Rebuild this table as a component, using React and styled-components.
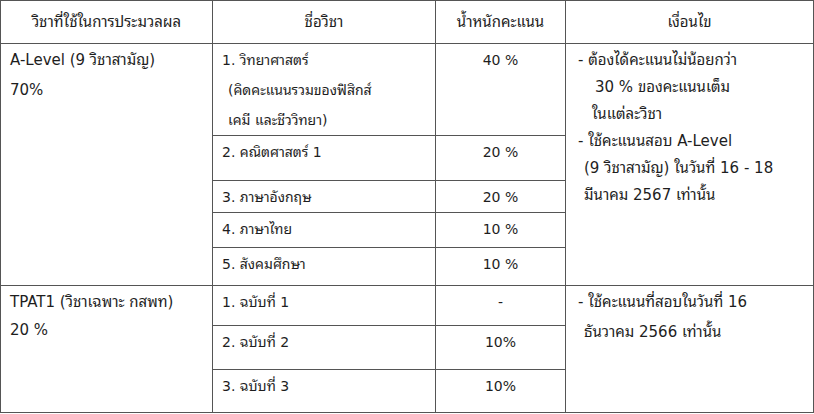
import React from "react";
import styled, { createGlobalStyle } from "styled-components";

const GlobalStyle = createGlobalStyle`
  html, body {
    margin: 0;
    padding: 0;
    background: #fff;
  }
  body {
    font-family: "DejaVu Sans", "Noto Sans Thai Looped", "Loma", "Garuda", "Waree", "Noto Sans Thai", "Noto Sans", sans-serif;
    color: #1e1e1e;
  }
`;

const criteria = [
  {
    name: ["A-Level (9 วิชาสามัญ)", "70%"],
    subjects: [
      { title: ["1. วิทยาศาสตร์", "(คิดคะแนนรวมของฟิสิกส์", "เคมี และชีววิทยา)"], weight: "40 %", h: 91 },
      { title: ["2. คณิตศาสตร์ 1"], weight: "20 %", h: 45 },
      { title: ["3. ภาษาอังกฤษ"], weight: "20 %", h: 32 },
      { title: ["4. ภาษาไทย"], weight: "10 %", h: 35 },
      { title: ["5. สังคมศึกษา"], weight: "10 %", h: 38 },
    ],
    notes: [
      { text: "-  ต้องได้คะแนนไม่น้อยกว่า", indent: 0 },
      { text: "30 % ของคะแนนเต็ม", indent: 17 },
      { text: "ในแต่ละวิชา", indent: 14 },
      { text: "- ใช้คะแนนสอบ A-Level", indent: 0 },
      { text: "(9 วิชาสามัญ) ในวันที่ 16 - 18", indent: 6 },
      { text: "มีนาคม  2567 เท่านั้น", indent: 6 },
    ],
    noteLine: 27,
    nameLine: 30,
  },
  {
    name: ["TPAT1 (วิชาเฉพาะ กสพท)", "20 %"],
    subjects: [
      { title: ["1. ฉบับที่ 1"], weight: "-", h: 40 },
      { title: ["2. ฉบับที่ 2"], weight: "10%", h: 44 },
      { title: ["3. ฉบับที่ 3"], weight: "10%", h: 43 },
    ],
    notes: [
      { text: "- ใช้คะแนนที่สอบในวันที่ 16", indent: 0 },
      { text: "ธันวาคม 2566 เท่านั้น", indent: 6 },
    ],
    noteLine: 30,
    nameLine: 28,
  },
];

const ScoreTable = () => (
  <Table>
    <colgroup>
      <col style={{ width: 212 }} />
      <col style={{ width: 223 }} />
      <col style={{ width: 130 }} />
      <col style={{ width: 248 }} />
    </colgroup>
    <thead>
      <Row $h={43}>
        <HeadCell>วิชาที่ใช้ในการประมวลผล</HeadCell>
        <HeadCell>ชื่อวิชา</HeadCell>
        <HeadCell>น้ำหนักคะแนน</HeadCell>
        <HeadCell>เงื่อนไข</HeadCell>
      </Row>
    </thead>
    <tbody>
      {criteria.map((group) =>
        group.subjects.map((sub, i) => {
          const lh = sub.title.length > 1 ? 30 : 24;
          return (
            <Row key={group.name[0] + i} $h={sub.h}>
              {i === 0 && (
                <Cell rowSpan={group.subjects.length} $line={group.nameLine} $size={15}>
                  {group.name.map((l) => (
                    <Line key={l} $line={group.nameLine}>{l}</Line>
                  ))}
                </Cell>
              )}
              <Cell $line={lh}>
                {sub.title.map((l, j) => (
                  <Line key={l} $line={lh} $indent={j > 0 ? 6 : 0}>
                    {l}
                  </Line>
                ))}
              </Cell>
              <Cell $center $line={24}>
                <Line $line={24}>{sub.weight}</Line>
              </Cell>
              {i === 0 && (
                <Cell
                  rowSpan={group.subjects.length}
                  $line={group.noteLine}
                  $pad={12}
                  $size={15}
                >
                  {group.notes.map((n) => (
                    <Line key={n.text} $line={group.noteLine} $indent={n.indent}>
                      {n.text}
                    </Line>
                  ))}
                </Cell>
              )}
            </Row>
          );
        })
      )}
    </tbody>
  </Table>
);

export default function App() {
  return (
    <>
      <GlobalStyle />
      <ScoreTable />
    </>
  );
}

const Table = styled.table`
  width: 814px;
  table-layout: fixed;
  border-collapse: collapse;
  font-size: 14px;
`;

const Row = styled.tr`
  height: ${(p) => p.$h}px;
`;

const HeadCell = styled.th`
  border: 1px solid #555;
  font-weight: normal;
  font-size: 15px;
  text-align: center;
  vertical-align: middle;
  padding: 0 4px;
  height: 42px;
  box-sizing: border-box;
  line-height: 20px;
  white-space: nowrap;
`;

const Cell = styled.td`
  border: 1px solid #555;
  vertical-align: top;
  text-align: ${(p) => (p.$center ? "center" : "left")};
  font-size: ${(p) => p.$size || 14}px;
  padding: ${(p) => Math.max(0, Math.round(16 - p.$line / 2))}px 4px 0
    ${(p) => (p.$center ? 4 : p.$pad || 9)}px;
  white-space: nowrap;
  overflow: hidden;
`;

const Line = styled.div`
  height: ${(p) => p.$line}px;
  line-height: ${(p) => p.$line}px;
  padding-left: ${(p) => p.$indent || 0}px;
`;
